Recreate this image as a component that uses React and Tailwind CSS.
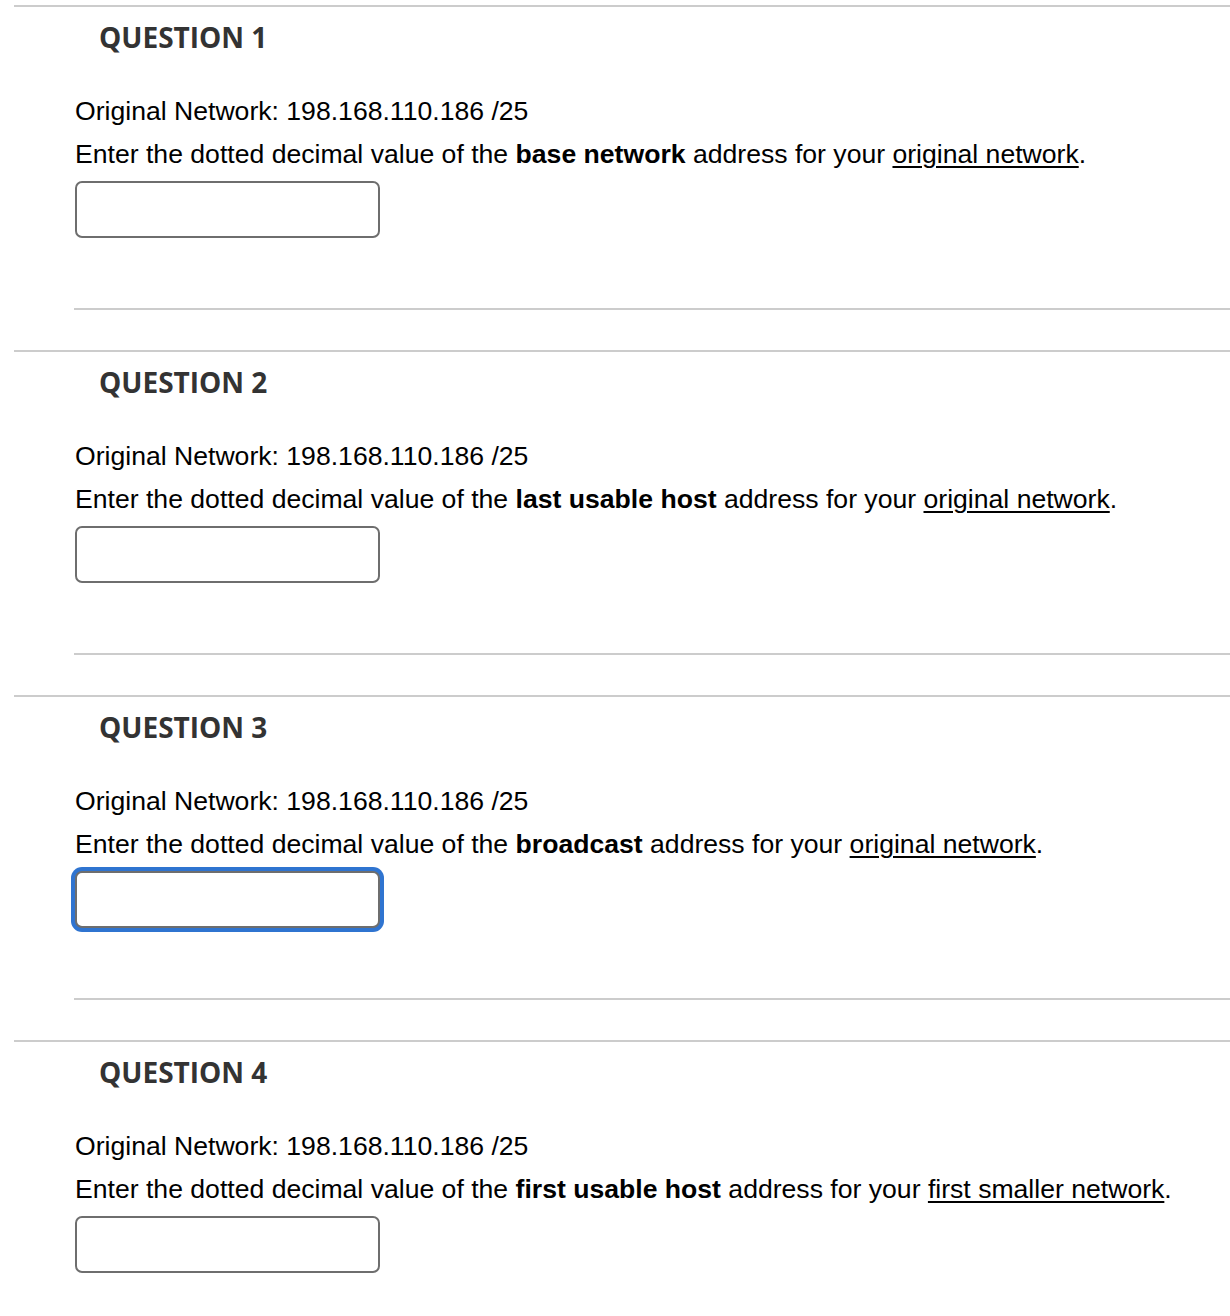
import React from "react";

const questions = [
  { n: 1, bold: "base network", link: "original network" },
  { n: 2, bold: "last usable host", link: "original network" },
  { n: 3, bold: "broadcast", link: "original network", focus: true },
  { n: 4, bold: "first usable host", link: "first smaller network" },
];

function Question({ q }) {
  return (
    <div className="ml-[14px] mb-[40px] border-t-2 border-[#cccccc]">
      <div className="h-[60px] flex items-center pl-[85px]">
        <h2
          className="text-[28px] font-bold text-[#333333] leading-none"
          style={{ fontFamily: '"Open Sans", sans-serif' }}
        >
          QUESTION {q.n}
        </h2>
      </div>
      <div
        className="pl-[61px] text-black text-[26.6px]"
        style={{ fontFamily: '"Liberation Sans", Arial, sans-serif' }}
      >
        <p className="mt-[29px] leading-[30px]">Original Network: 198.168.110.186 /25</p>
        <p className="mt-[13px] leading-[30px]">
          Enter the dotted decimal value of the <b>{q.bold}</b> address for your{" "}
          <span className="underline underline-offset-[3px] decoration-[2px]">{q.link}</span>.
        </p>
        <div className="mt-[12px]">
          <input
            type="text"
            className={
              "block w-[305px] h-[57px] rounded-[7px] border-2 border-[#6e6e6e] bg-white outline-none " +
              (q.focus ? "shadow-[0_0_0_4px_#2f74d0]" : "")
            }
          />
        </div>
      </div>
      <div className="ml-[60px] mt-[70px] border-t-2 border-[#cccccc]" />
    </div>
  );
}

export default function App() {
  return (
    <div className="w-[1230px] h-[1316px] bg-white pt-[5px] overflow-hidden">
      {questions.map((q) => (
        <Question key={q.n} q={q} />
      ))}
    </div>
  );
}
